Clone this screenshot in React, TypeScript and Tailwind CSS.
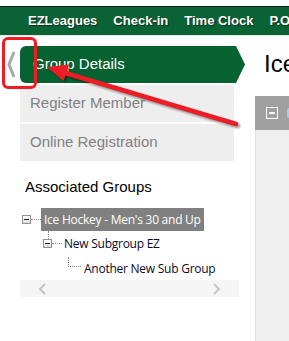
import React from 'react';

const navItems = ['EZLeagues', 'Check-in', 'Time Clock', 'P.O.S.'];

function TreeBox() {
  return (
    <span className="relative flex w-[9px] h-[9px] shrink-0 items-center justify-center border border-[#919191] bg-gradient-to-b from-white to-[#dcdcdc]">
      <span className="block w-[5px] h-px bg-[#222]" />
    </span>
  );
}

export default function App() {
  return (
    <div className="relative w-[289px] h-[341px] overflow-hidden bg-white font-['Liberation_Sans',Arial,sans-serif]">
      {/* top nav */}
      <div className="h-[6px] bg-white" />
      <div className="h-px bg-[#1d1d1d]" />
      <div className="h-[28px] bg-[#0a6334] flex items-center pl-[20px] whitespace-nowrap">
        {navItems.map(item => (
          <span key={item} className="px-[8px] text-[13px] font-bold text-white [text-shadow:1px_1px_1px_rgba(0,0,0,0.55)]">
            {item}
          </span>
        ))}
      </div>
      <div className="h-px bg-[#e6e6e6]" />

      <div className="flex">
        {/* left column */}
        <div className="w-[255px] shrink-0 pl-[20px] pt-[10px]">
          <div className="h-[37px] w-[225px] bg-[#076232] rounded-l-[6px] [clip-path:polygon(0_0,calc(100%-9px)_0,100%_50%,calc(100%-9px)_100%,0_100%)] flex items-center pl-[13px] text-[15px] text-white">
            Group Details
          </div>
          <div className="mt-[2px] h-[37px] w-[214px] bg-[#eeeeee] flex items-center pl-[10px] text-[15px] text-[#818181]">
            Register Member
          </div>
          <div className="mt-[2px] h-[37px] w-[214px] bg-[#eeeeee] flex items-center pl-[10px] text-[15px] text-[#818181]">
            Online Registration
          </div>

          <div className="mt-[16px] pl-[5px] text-[15px] leading-[20px] text-black">Associated Groups</div>

          <div className="mt-[11px] font-['Open_Sans',sans-serif] text-[12px] tracking-[-0.25px] whitespace-nowrap">
            <div className="h-[23px] flex items-center">
              <span className="ml-[2px]"><TreeBox /></span>
              <span className="w-[10px] border-t border-dotted border-[#8a8a8a]" />
              <span className="h-[23px] flex items-center bg-[#808080] text-white px-[3px]">Ice Hockey - Men's 30 and Up</span>
            </div>
            <div className="h-[26px] flex">
              <div className="ml-[23px] flex flex-col">
                <span className="ml-[5px] h-[8px] border-l border-dotted border-[#8a8a8a]" />
                <TreeBox />
              </div>
              <span className="mt-[12px] w-[10px] h-px border-t border-dotted border-[#8a8a8a]" />
              <span className="ml-[2px] mt-[4px] text-[#0a0a2a]">New Subgroup EZ</span>
            </div>
            <div className="h-[23px] flex">
              <span className="ml-[48px] w-[13px] h-[10px] border-l border-b border-dotted border-[#8a8a8a]" />
              <span className="ml-[3px] mt-[3px] text-[#0a0a2a]">Another New Sub Group</span>
            </div>
          </div>

          <div className="h-[17px] w-[219px] bg-[#f5f5f5] flex items-center justify-between px-[18px]">
            <svg width="8" height="12" viewBox="0 0 8 12"><path d="M7 1L2 6l5 5" fill="none" stroke="#c4c4c4" strokeWidth="2" /></svg>
            <svg width="8" height="12" viewBox="0 0 8 12"><path d="M1 1l5 5-5 5" fill="none" stroke="#c4c4c4" strokeWidth="2" /></svg>
          </div>
        </div>

        {/* right column */}
        <div className="flex-1 flex flex-col">
          <div className="h-[60px] pl-[9px] pt-[14px] text-[24px] leading-[28px] text-black whitespace-nowrap">Ice Hockey</div>
          <div className="h-[34px] bg-[#a0a0a0] flex items-center pl-[11px] gap-[9px]">
            <span className="flex w-[12px] h-[12px] items-center justify-center border border-white">
              <span className="block w-[6px] h-[2px] bg-white" />
            </span>
            <span className="w-[6px] h-[10px] bg-[#9fd0f0] rounded-[2px]" />
          </div>
          <div className="h-[220px] bg-[#efefef] border-l border-[#e2e2e2]" />
        </div>
      </div>

      {/* annotation: red box around the collapse chevron */}
      <div className="absolute left-[2px] top-[37px] w-[35px] h-[52px] rounded-[6px] border-[3px] border-[#ee1c24]" />
      <svg className="absolute left-0 top-0" width="289" height="341" viewBox="0 0 289 341">
        <path d="M14 52L9 64.5L14 77" fill="none" stroke="#a8a8a8" strokeWidth="3" />
      </svg>

      {/* annotation: red arrow */}
      <svg className="absolute left-0 top-0 drop-shadow-[2px_2px_1px_rgba(0,0,0,0.4)]" width="289" height="341" viewBox="0 0 289 341">
        <line x1="236" y1="124" x2="62" y2="72" stroke="#ee1c24" strokeWidth="4.5" strokeLinecap="round" />
        <polygon points="47,67 69,64.5 63.5,81" fill="#ee1c24" />
      </svg>
    </div>
  );
}
